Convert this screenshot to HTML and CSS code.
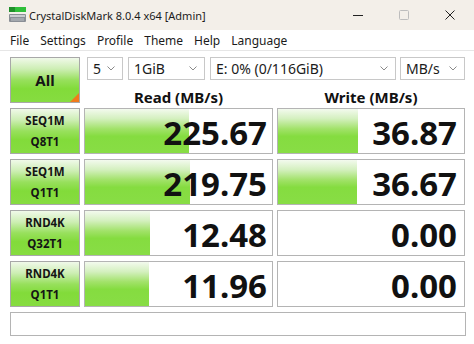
FILE: index.html
```html
<!DOCTYPE html>
<html>
<head>
<meta charset="utf-8">
<title>CrystalDiskMark</title>
<link rel="stylesheet" href="styles.css">
</head>
<body>
<div class="window">
  <div class="titlebar">
    <svg class="appicon" width="17" height="16" viewBox="0 0 17 16">
      <rect x="0" y="0" width="17" height="5" fill="#2fbf3a"/>
      <rect x="0" y="0" width="6" height="5" fill="#1f8f2a"/>
      <rect x="0" y="7" width="17" height="8" rx="1" fill="#8a8f96"/>
      <rect x="1" y="8" width="15" height="2" fill="#c9ccd0"/>
      <rect x="2" y="11" width="13" height="3" fill="#a3a8ae"/>
    </svg>
    <span class="title">CrystalDiskMark 8.0.4 x64 [Admin]</span>
    <div class="controls">
      <div class="ctrl"><svg width="10" height="10" viewBox="0 0 10 10"><line x1="0" y1="5.5" x2="10" y2="5.5" stroke="#222" stroke-width="1"/></svg></div>
      <div class="ctrl"><svg width="10" height="10" viewBox="0 0 10 10"><rect x="0.5" y="0.5" width="9" height="9" rx="1" fill="none" stroke="#bdbdbd" stroke-width="1"/></svg></div>
      <div class="ctrl"><svg width="10" height="10" viewBox="0 0 10 10"><path d="M0.5 0.5 L9.5 9.5 M9.5 0.5 L0.5 9.5" stroke="#222" stroke-width="1"/></svg></div>
    </div>
  </div>
  <div class="menubar">
    <span class="mi">File</span>
    <span class="mi">Settings</span>
    <span class="mi">Profile</span>
    <span class="mi">Theme</span>
    <span class="mi">Help</span>
    <span class="mi">Language</span>
  </div>
  <div class="main">
    <div class="top">
      <div class="btn all">All<span class="corner"></span></div>
      <div class="selects">
        <div class="sel s-count"><span>5</span><svg class="chev" width="8" height="5" viewBox="0 0 8 5"><path d="M0.5 0.5 L4 4 L7.5 0.5" fill="none" stroke="#8a8a8a" stroke-width="1"/></svg></div>
        <div class="sel s-size"><span>1GiB</span><svg class="chev" width="8" height="5" viewBox="0 0 8 5"><path d="M0.5 0.5 L4 4 L7.5 0.5" fill="none" stroke="#8a8a8a" stroke-width="1"/></svg></div>
        <div class="sel s-drive"><span>E: 0% (0/116GiB)</span><svg class="chev" width="8" height="5" viewBox="0 0 8 5"><path d="M0.5 0.5 L4 4 L7.5 0.5" fill="none" stroke="#8a8a8a" stroke-width="1"/></svg></div>
        <div class="sel s-unit"><span>MB/s</span><svg class="chev" width="8" height="5" viewBox="0 0 8 5"><path d="M0.5 0.5 L4 4 L7.5 0.5" fill="none" stroke="#8a8a8a" stroke-width="1"/></svg></div>
      </div>
      <div class="hdr">Read (MB/s)</div>
      <div class="hdr">Write (MB/s)</div>
    </div>
    <div class="rows">
      <div class="btn label"><span>SEQ1M</span><span>Q8T1</span></div>
      <div class="cell" style="--w:104px">225.67</div>
      <div class="cell wr" style="--w:80px">36.87</div>

      <div class="btn label"><span>SEQ1M</span><span>Q1T1</span></div>
      <div class="cell" style="--w:105px">219.75</div>
      <div class="cell wr" style="--w:79px">36.67</div>

      <div class="btn label"><span>RND4K</span><span>Q32T1</span></div>
      <div class="cell" style="--w:65px">12.48</div>
      <div class="cell wr" style="--w:0px">0.00</div>

      <div class="btn label"><span>RND4K</span><span>Q1T1</span></div>
      <div class="cell" style="--w:64px">11.96</div>
      <div class="cell wr" style="--w:0px">0.00</div>
    </div>
    <div class="status"></div>
  </div>
</div>
</body>
</html>
```
FILE: styles.css
```css
html, body {
  margin: 0;
  padding: 0;
}
body {
  width: 474px;
  height: 344px;
  overflow: hidden;
  background: #ffffff;
  font-family: "Noto Sans", "Open Sans", sans-serif;
  color: #111;
}
.window {
  width: 474px;
  height: 344px;
}
.titlebar {
  height: 30px;
  background: #f3efe9;
  display: flex;
  align-items: center;
}
.appicon {
  margin-left: 9px;
  margin-top: -1px;
}
.title {
  margin-left: 3px;
  font-size: 11px;
  color: #1b1b1b;
}
.controls {
  margin-left: auto;
  margin-right: 1px;
  display: flex;
}
.ctrl {
  width: 46px;
  height: 30px;
  display: flex;
  align-items: center;
  justify-content: center;
}
.menubar {
  height: 20px;
  display: flex;
  align-items: center;
  gap: 11px;
  padding-left: 10px;
  font-size: 12px;
  color: #1b1b1b;
  border-bottom: 1px solid #e6e6e6;
  background: #fff;
}
.main {
  padding: 6px 9px 0 10px;
}
.top {
  display: grid;
  grid-template-columns: 70px 189px 188px;
  grid-template-rows: 23px 28px;
  column-gap: 4px;
}
.btn {
  box-sizing: border-box;
  border: 1px solid #a8a8a8;
  background: linear-gradient(to bottom, #f0f9e9 0%, #cdeeb4 25%, #98e05d 50%, #82db3a 70%, #86dc40 100%);
  display: flex;
  flex-direction: column;
  align-items: center;
  justify-content: center;
  font-weight: 700;
  color: #151515;
}
.all {
  grid-row: 1 / 3;
  height: 46px;
  align-self: start;
  font-size: 15px;
  position: relative;
}
.corner {
  position: absolute;
  right: 0;
  bottom: 0;
  width: 0;
  height: 0;
  border-left: 9px solid transparent;
  border-bottom: 9px solid #f07a1c;
}
.selects {
  grid-column: 2 / 4;
  display: flex;
  gap: 5px;
  padding-left: 3px;
}
.sel {
  box-sizing: border-box;
  height: 23px;
  border: 1px solid #c8c8c8;
  background: #fff;
  display: flex;
  align-items: center;
  justify-content: space-between;
  padding: 0 7px 0 5px;
  font-size: 14px;
  color: #1b1b1b;
}
.chev {
  flex: none;
}
.s-count { width: 36px; }
.s-size { width: 77px; }
.s-drive { width: 186px; }
.s-unit { width: 65px; margin-left: -1px; }
.hdr {
  align-self: end;
  line-height: 18px;
  padding-bottom: 2px;
  text-align: center;
  font-weight: 700;
  font-size: 15px;
}
.rows {
  display: grid;
  grid-template-columns: 70px 189px 188px;
  grid-auto-rows: 46px;
  column-gap: 4px;
  row-gap: 5px;
}
.label {
  font-size: 11.5px;
  line-height: 21px;
}
.cell {
  box-sizing: border-box;
  border: 1px solid #b4b4b4;
  background-color: #fff;
  background-image: linear-gradient(to bottom, #f3faee 0%, #d4f0bf 22%, #a2e26a 45%, #85dc40 62%, #88dd45 100%);
  background-repeat: no-repeat;
  background-size: var(--w) 100%;
  display: flex;
  align-items: center;
  justify-content: flex-end;
  padding: 3px 5px 0 0;
  font-size: 33px;
  line-height: 1;
  font-weight: 700;
  color: #111;
}
.cell.wr {
  padding-right: 7px;
}
.status {
  box-sizing: border-box;
  margin-top: 5px;
  width: 456px;
  height: 24px;
  border: 1px solid #b4b4b4;
  background: #fff;
}
```
